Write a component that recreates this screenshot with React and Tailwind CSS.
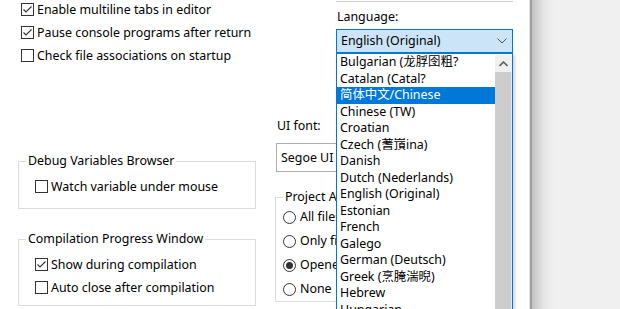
import React from "react";

const LANGS = [
  "Bulgarian (龙脬囹粗?",
  "Catalan (Catal?",
  "简体中文/Chinese",
  "Chinese (TW)",
  "Croatian",
  "Czech (蓍嵿ina)",
  "Danish",
  "Dutch (Nederlands)",
  "English (Original)",
  "Estonian",
  "French",
  "Galego",
  "German (Deutsch)",
  "Greek (烹腌湍晲)",
  "Hebrew",
  "Hungarian",
];

function CheckBox({ checked, label }) {
  return (
    <div className="flex h-[23px] items-center gap-[3px] whitespace-nowrap">
      <span className="flex h-[13px] w-[13px] shrink-0 items-center justify-center border border-[#333333] bg-white">
        {checked && (
          <svg width="11" height="11" viewBox="0 0 11 11">
            <polyline points="1.5 5.5 4 8 9.5 2.5" fill="none" stroke="#333333" strokeWidth="1.1" />
          </svg>
        )}
      </span>
      <span>{label}</span>
    </div>
  );
}

function Radio({ checked, label }) {
  return (
    <div className="flex h-[24px] items-center gap-[4px] whitespace-nowrap">
      <span className="flex h-[13px] w-[13px] shrink-0 items-center justify-center rounded-full border border-[#333333] bg-white">
        {checked && <span className="h-[7px] w-[7px] rounded-full bg-[#333333]" />}
      </span>
      <span>{label}</span>
    </div>
  );
}

function Group({ title, children, className = "" }) {
  return (
    <fieldset className={"border border-[#dcdcdc] " + className}>
      <legend className="ml-[7px] px-[2px] leading-[16px]">{title}</legend>
      {children}
    </fieldset>
  );
}

export default function App() {
  return (
    <div
      className="flex h-[309px] w-[620px] overflow-hidden bg-white text-[12.4px] leading-[16px] text-black"
      style={{ fontFamily: '"Noto Sans", "Noto Sans CJK SC", sans-serif' }}
    >
      <div className="flex w-[530px] shrink-0 border-r border-[#e2e2e2] bg-white">
        {/* left column */}
        <div className="flex w-[256px] shrink-0 flex-col pl-[18px]">
          <div className="-mt-[2px] pl-[3px]">
            <CheckBox checked label="Enable multiline tabs in editor" />
            <CheckBox checked label="Pause console programs after return" />
            <CheckBox label="Check file associations on startup" />
          </div>

          <Group title="Debug Variables Browser" className="mt-[86px] pb-[10px]">
            <div className="mt-[6px] pl-[16px]">
              <CheckBox label="Watch variable under mouse" />
            </div>
          </Group>

          <Group title="Compilation Progress Window" className="mt-[22px] pb-[6px]">
            <div className="mt-[6px] pl-[16px]">
              <CheckBox checked label="Show during compilation" />
              <CheckBox label="Auto close after compilation" />
            </div>
          </Group>
        </div>

        {/* right region */}
        <div className="ml-[19px] flex min-w-0 flex-1 flex-col">
          <div className="w-[238px] pl-[61px]">
            <div className="h-[2px] border-b border-[#cfcfcf]" />
            <div className="mt-[7px] pl-[1px]">Language:</div>
            <div className="relative mt-[4px]">
              <div className="flex h-[24px] items-center justify-between border border-[#0078d7] bg-[#cce4f7] pl-[4px] pr-[5px]">
                <span>English (Original)</span>
                <svg width="10" height="6" viewBox="0 0 10 6">
                  <polyline points="0.5 0.5 5 5 9.5 0.5" fill="none" stroke="#505050" strokeWidth="1" />
                </svg>
              </div>

              {/* open dropdown list */}
              <div className="absolute left-0 top-full z-10 flex h-[270px] w-[177px] border border-[#0078d7] bg-white shadow-[2px_2px_3px_rgba(0,0,0,0.18)]">
                <div className="flex min-w-0 flex-1 flex-col">
                  {LANGS.map((l, i) => (
                    <div
                      key={l}
                      className={
                        "flex h-[16.5px] shrink-0 items-center whitespace-nowrap pl-[3px] " +
                        (i === 2 ? "bg-[#0078d7] text-white" : "")
                      }
                    >
                      {l}
                    </div>
                  ))}
                </div>
                <div className="flex w-[17px] shrink-0 flex-col pt-[1px]">
                  <div className="flex h-[17px] items-center justify-center bg-[#f0f0f0]">
                    <svg width="9" height="6" viewBox="0 0 9 6">
                      <polyline points="0.5 5 4.5 1 8.5 5" fill="none" stroke="#606060" strokeWidth="1.6" />
                    </svg>
                  </div>
                  <div className="flex-1 border-r border-[#e8e8e8] bg-[#cdcdcd]" />
                </div>
              </div>
            </div>
          </div>

          <div className="mt-[65px] pl-[2px]">UI font:</div>
          <div className="ml-[1px] mt-[9px] flex h-[29px] w-[220px] items-center border border-[#adadad] pl-[4px]">
            Segoe UI
          </div>

          <Group title="Project Auto Open" className="mt-[17px] w-[228px]">
            <div className="pl-[7px]">
              <Radio label="All files" />
              <Radio label="Only first file" />
              <Radio checked label="Opened files" />
              <Radio label="None" />
            </div>
          </Group>
        </div>
      </div>

      <div className="w-[2px] shrink-0 bg-[#9e9e9e]" />
      <div className="flex-1 bg-[linear-gradient(to_right,#c2c2c2,#e6e6e6_12px,#f0f0f0_22px)]" />
    </div>
  );
}
